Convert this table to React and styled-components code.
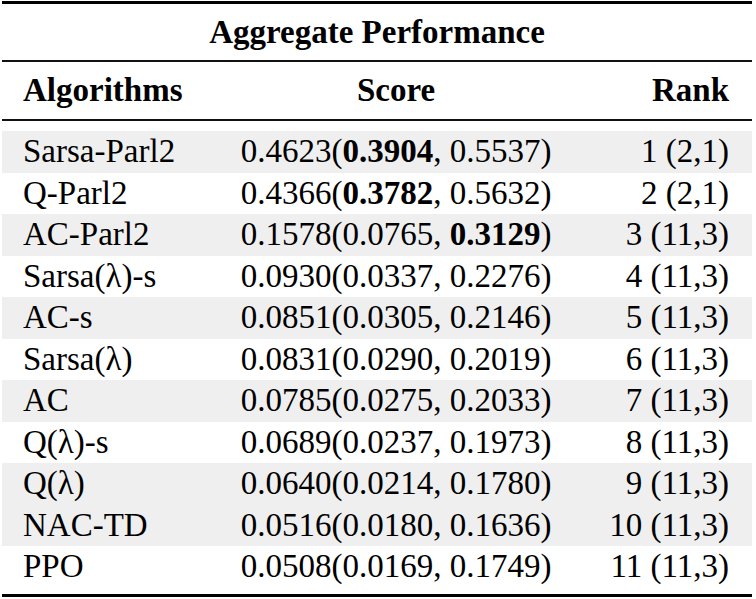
import React from "react";
import styled, { createGlobalStyle } from "styled-components";

const GlobalStyle = createGlobalStyle`
  html, body {
    margin: 0;
    padding: 0;
    background: #ffffff;
  }
`;

const rows = [
  { name: "Sarsa-Parl2", mean: "0.4623", lo: "0.3904", hi: "0.5537", bold: "lo", rank: "1 (2,1)", shaded: true },
  { name: "Q-Parl2", mean: "0.4366", lo: "0.3782", hi: "0.5632", bold: "lo", rank: "2 (2,1)" },
  { name: "AC-Parl2", mean: "0.1578", lo: "0.0765", hi: "0.3129", bold: "hi", rank: "3 (11,3)", shaded: true },
  { name: "Sarsa(λ)-s", mean: "0.0930", lo: "0.0337", hi: "0.2276", rank: "4 (11,3)" },
  { name: "AC-s", mean: "0.0851", lo: "0.0305", hi: "0.2146", rank: "5 (11,3)", shaded: true },
  { name: "Sarsa(λ)", mean: "0.0831", lo: "0.0290", hi: "0.2019", rank: "6 (11,3)" },
  { name: "AC", mean: "0.0785", lo: "0.0275", hi: "0.2033", rank: "7 (11,3)", shaded: true },
  { name: "Q(λ)-s", mean: "0.0689", lo: "0.0237", hi: "0.1973", rank: "8 (11,3)" },
  { name: "Q(λ)", mean: "0.0640", lo: "0.0214", hi: "0.1780", rank: "9 (11,3)", shaded: true },
  { name: "NAC-TD", mean: "0.0516", lo: "0.0180", hi: "0.1636", rank: "10 (11,3)", shaded: true },
  { name: "PPO", mean: "0.0508", lo: "0.0169", hi: "0.1749", rank: "11 (11,3)" },
];

export default function App() {
  return (
    <>
      <GlobalStyle />
      <Table>
        <Title>Aggregate Performance</Title>
        <HeadRow>
          <Cell>Algorithms</Cell>
          <Cell $align="center">Score</Cell>
          <Cell $align="right">Rank</Cell>
        </HeadRow>
        <Body>
          {rows.map((r, i) => (
            <Row key={i} $shaded={r.shaded}>
              <Cell>{r.name}</Cell>
              <Cell $align="center">
                {r.mean}(
                {r.bold === "lo" ? <Strong>{r.lo}</Strong> : r.lo},{" "}
                {r.bold === "hi" ? <Strong>{r.hi}</Strong> : r.hi})
              </Cell>
              <Cell $align="right">{r.rank}</Cell>
            </Row>
          ))}
        </Body>
      </Table>
    </>
  );
}

const Table = styled.div`
  width: 750px;
  margin: 1px 0 0 2px;
  border-top: 3px solid #000;
  border-bottom: 3px solid #000;
  display: flex;
  flex-direction: column;
  font-family: "Liberation Serif";
  color: #000;
`;

const Title = styled.div`
  height: 56px;
  display: flex;
  align-items: center;
  justify-content: center;
  font-family: "Liberation Serif";
  font-size: 33px;
  font-weight: bold;
  border-bottom: 2px solid #111;
`;

const Grid = styled.div`
  display: grid;
  grid-template-columns: 200px 1fr 160px;
  align-items: center;
  padding: 0 23px 0 21px;
`;

const HeadRow = styled(Grid)`
  height: 57px;
  font-size: 33px;
  font-weight: bold;
  border-bottom: 2px solid #111;
`;

const Body = styled.div`
  padding: 10px 0 6.5px;
  display: flex;
  flex-direction: column;
`;

const Row = styled(Grid)`
  height: 41.5px;
  font-size: 33px;
  background: ${(p) => (p.$shaded ? "#efefef" : "transparent")};
`;

const Cell = styled.div`
  text-align: ${(p) => p.$align || "left"};
  white-space: nowrap;
  font-family: "Liberation Serif";
`;

const Strong = styled.b`
  font-weight: bold;
`;
